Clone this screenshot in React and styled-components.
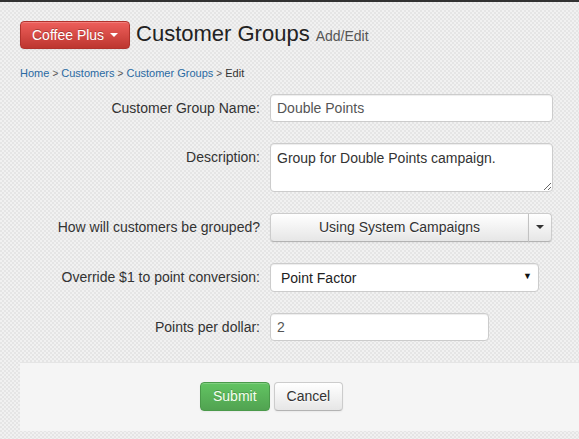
import { useState } from "react";
import styled, { createGlobalStyle } from "styled-components";

const GlobalStyle = createGlobalStyle`
  html, body {
    margin: 0;
    padding: 0;
  }
  body {
    font-family: "Liberation Sans", Arial, Helvetica, sans-serif;
    font-size: 14px;
    color: #333;
    border-top: 2px solid #333;
    min-height: 437px;
    background-color: #ebebeb;
    /* 細かいチェック柄の背景 */
    background-image: repeating-conic-gradient(#e5e5e5 0 25%, #f1f1f1 0 50%);
    background-size: 4px 4px;
  }
`;

const App = () => {
  const [name, setName] = useState("Double Points");
  const [description, setDescription] = useState("Group for Double Points campaign.");
  const [factor, setFactor] = useState("point");
  const [points, setPoints] = useState("2");

  return (
    <>
      <GlobalStyle />
      <Page>
        <Header>
          <BrandButton type="button">
            Coffee Plus <Caret $color="#fff" />
          </BrandButton>
          <Title>Customer Groups</Title>
          <SubTitle>Add/Edit</SubTitle>
        </Header>

        <Breadcrumb>
          <a href="#">Home</a> <Sep>&gt;</Sep> <a href="#">Customers</a> <Sep>&gt;</Sep>{" "}
          <a href="#">Customer Groups</a> <Sep>&gt;</Sep> Edit
        </Breadcrumb>

        <Form onSubmit={(e) => e.preventDefault()}>
          <Label>Customer Group Name:</Label>
          <TextInput value={name} onChange={(e) => setName(e.target.value)} $width={283} />

          <Label>Description:</Label>
          <TextArea value={description} onChange={(e) => setDescription(e.target.value)} />

          <Label>How will customers be grouped?</Label>
          <ButtonGroup>
            <DefaultButton type="button" $width={259}>
              Using System Campaigns
            </DefaultButton>
            <DefaultButton type="button" $width={24} $split>
              <Caret $color="#333" />
            </DefaultButton>
          </ButtonGroup>

          <Label>Override $1 to point conversion:</Label>
          <SelectWrap>
            <Select value={factor} onChange={(e) => setFactor(e.target.value)}>
              <option value="point">Point Factor</option>
              <option value="none">None</option>
            </Select>
            <SelectArrow>▼</SelectArrow>
          </SelectWrap>

          <Label>Points per dollar:</Label>
          <TextInput value={points} onChange={(e) => setPoints(e.target.value)} $width={219} />
        </Form>

        <Actions>
          <SubmitButton type="submit">Submit</SubmitButton>
          <DefaultButton type="button">Cancel</DefaultButton>
        </Actions>
      </Page>
    </>
  );
};

export default App;

const Page = styled.div`
  padding-top: 19px;
`;

const Header = styled.div`
  display: flex;
  align-items: center;
  height: 28px;
  padding-left: 20px;
`;

const Caret = styled.span`
  display: inline-block;
  width: 0;
  height: 0;
  border-top: 4px solid ${(p) => p.$color};
  border-left: 4px solid transparent;
  border-right: 4px solid transparent;
  vertical-align: middle;
  margin-top: -2px;
`;

const BrandButton = styled.button`
  font-family: inherit;
  font-size: 14px;
  line-height: 18px;
  height: 28px;
  padding: 4px 11px;
  color: #fff;
  text-shadow: 0 -1px 0 rgba(0, 0, 0, 0.25);
  background-image: linear-gradient(to bottom, #ee5f5b, #bd362f);
  border: 1px solid #b1322c;
  border-radius: 4px;
  box-shadow: inset 0 1px 0 rgba(255, 255, 255, 0.2), 0 1px 2px rgba(0, 0, 0, 0.05);
  cursor: pointer;

  ${Caret} {
    margin-left: 2px;
  }
`;

const Title = styled.h1`
  margin: -3px 0 0 6px;
  font-size: 22px;
  font-weight: normal;
  color: #222;
`;

const SubTitle = styled.small`
  margin: 2px 0 0 6px;
  font-size: 14px;
  color: #555;
`;

const Breadcrumb = styled.div`
  margin: 16px 0 0 20px;
  height: 16px;
  font-size: 11px;
  line-height: 16px;
  color: #333;

  a {
    color: #2a6aa3;
    text-decoration: none;
  }
`;

const Sep = styled.span`
  font-size: 10px;
  line-height: 1;
  color: #555;
`;

const Form = styled.form`
  display: grid;
  grid-template-columns: 240px auto;
  justify-content: start;
  align-items: start;
  column-gap: 10px;
  row-gap: 21px;
  margin-top: 13px;
  padding-left: 20px;
`;

const Label = styled.label`
  text-align: right;
  font-size: 14px;
  line-height: 20px;
  padding-top: 4px;
  color: #333;
`;

const fieldStyle = `
  box-sizing: border-box;
  font-family: inherit;
  font-size: 14px;
  background: #fff;
  border: 1px solid #ccc;
  border-radius: 4px;
  box-shadow: inset 0 1px 1px rgba(0, 0, 0, 0.075);
  outline: none;
`;

const TextInput = styled.input`
  ${fieldStyle}
  width: ${(p) => p.$width}px;
  height: 28px;
  padding: 4px 6px;
  color: #555;
`;

const TextArea = styled.textarea`
  ${fieldStyle}
  width: 283px;
  height: 49px;
  padding: 4px 6px;
  line-height: 20px;
  color: #333;
  resize: vertical;
`;

const ButtonGroup = styled.div`
  display: flex;
`;

const DefaultButton = styled.button`
  box-sizing: border-box;
  width: ${(p) => (p.$width ? `${p.$width}px` : "auto")};
  height: 29px;
  padding: 4px ${(p) => (p.$split ? "0" : "12px")};
  font-family: inherit;
  font-size: 14px;
  line-height: 19px;
  color: #333;
  text-shadow: 0 1px 1px rgba(255, 255, 255, 0.75);
  background-image: linear-gradient(to bottom, #ffffff, #e6e6e6);
  border: 1px solid #ccc;
  border-bottom-color: #b3b3b3;
  border-radius: 4px;
  box-shadow: inset 0 1px 0 rgba(255, 255, 255, 0.2), 0 1px 2px rgba(0, 0, 0, 0.05);
  cursor: pointer;

  ${ButtonGroup} > &:first-child {
    border-top-right-radius: 0;
    border-bottom-right-radius: 0;
  }
  ${ButtonGroup} > &:last-child {
    border-top-left-radius: 0;
    border-bottom-left-radius: 0;
    border-left-color: #c2c2c2;
    margin-left: -1px;
  }
`;

const SelectWrap = styled.div`
  position: relative;
  width: 269px;
`;

const Select = styled.select`
  ${fieldStyle}
  appearance: none;
  width: 269px;
  height: 29px;
  padding: 4px 10px;
  color: #222;
`;

const SelectArrow = styled.span`
  position: absolute;
  right: 7px;
  top: 8px;
  font-size: 9px;
  color: #111;
  pointer-events: none;
`;

const Actions = styled.div`
  display: flex;
  gap: 4px;
  margin: 21px 0 0 20px;
  padding: 19px 20px 20px 180px;
  background: #f5f5f5;
  border-top: 1px solid #e5e5e5;
`;

const SubmitButton = styled.button`
  box-sizing: border-box;
  height: 29px;
  padding: 4px 12px;
  font-family: inherit;
  font-size: 14px;
  line-height: 19px;
  color: #f4fff0;
  text-shadow: 0 -1px 0 rgba(0, 0, 0, 0.2);
  background-image: linear-gradient(to bottom, #62c462, #51a351);
  border: 1px solid #4a9a4a;
  border-radius: 4px;
  box-shadow: inset 0 1px 0 rgba(255, 255, 255, 0.2), 0 1px 2px rgba(0, 0, 0, 0.05);
  cursor: pointer;
`;
